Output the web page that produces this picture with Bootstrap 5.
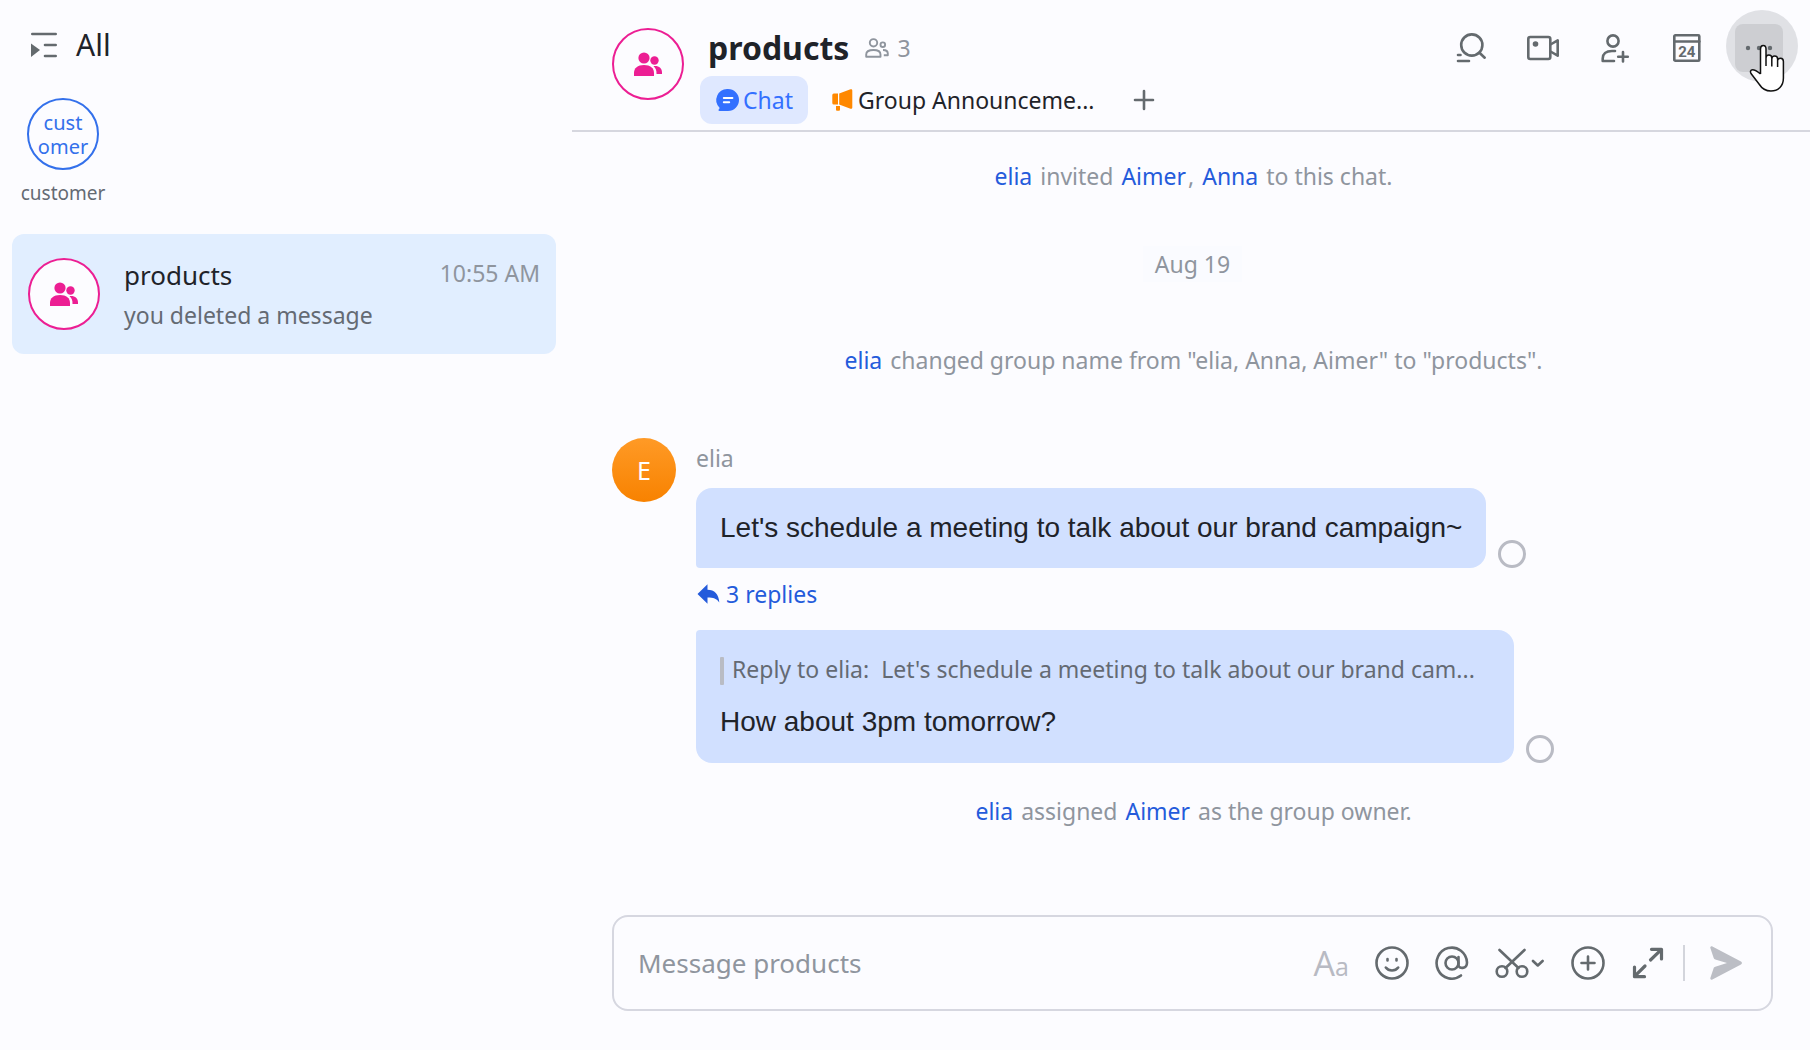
<!DOCTYPE html>
<html lang="en">
<head>
<meta charset="utf-8">
<meta name="viewport" content="width=device-width, initial-scale=1">
<title>products - Chat</title>
<link href="https://cdn.jsdelivr.net/npm/bootstrap@5.3.0/dist/css/bootstrap.min.css" rel="stylesheet">
<style>
:root { --ink:#1f2329; --mid:#646a73; --soft:#8f959e; --link:#245bdb; --pink:#ec1e93; --bubble:#d1e0ff; }
body { background:#fcfcff; color:var(--ink); font-family:"Noto Sans","Open Sans",sans-serif; font-size:23px; line-height:32px; }
svg { display:block; flex:none; overflow:visible; }
a { color:var(--link); text-decoration:none; }
button { color:inherit; }
.tool { border:0; background:none; padding:0; color:#646a6e; display:flex; align-items:center; justify-content:center; }
.ln { fill:none; stroke:currentColor; stroke-width:2.6; stroke-linecap:round; stroke-linejoin:round; }
.thick { stroke-width:3.2; }
.soft { color:var(--soft); }
.mid { color:var(--mid); }

.side { width:572px; padding:25px 16px 0 12px; }
.side-head { padding-left:19px; gap:19px; height:40px; }
.side-head h1 { font-size:30px; line-height:40px; font-weight:400; }
.pin { width:102px; margin-top:33px; gap:11px; font-size:19px; line-height:24px; }
.ring { width:72px; height:72px; border:2px solid var(--pink); color:var(--pink); border-radius:50%; background:#fcfcff; display:flex; align-items:center; justify-content:center; flex:none; }
.ring-blue { border-color:#3370eb; color:#3370eb; font-size:20px; line-height:24px; padding-top:2px; }
.chat-row { margin-top:29px; padding:0 16px; height:120px; border-radius:12px; background:#e1eeff; gap:24px; color:var(--ink); }
.chat-name { font-size:26px; line-height:36px; }
.chat-last { margin-top:6px; }

.top-bar { border-bottom:2px solid #d6d7df; padding:20px 27px 6px 40px; }
.title-row { height:56px; gap:16px; padding-left:8px; }
.title-row h2 { font-size:32px; line-height:40px; font-weight:700; }
.tabs { height:48px; gap:24px; }
.tab-chip { height:48px; border-radius:12px; color:var(--ink); display:flex; align-items:center; gap:4px; }
.tab-chip.on { background:#dfe8ff; color:#3370ff; padding:0 15px 0 17px; }
.acts { height:56px; gap:24px; }
.acts .tool { width:48px; height:48px; }
.acts .more { position:relative; background:#d2d3d5; border-radius:8px; }
.halo { position:absolute; left:-9px; top:-14px; width:72px; height:72px; border-radius:50%; background:#c9cad0; opacity:.55; }
.hand { position:absolute; left:14px; top:20px; }
.dots { position:relative; }

.feed { padding:28px 37px 0 40px; }
.note { text-align:center; color:var(--soft); }
.note a { margin:0 2px; }
.day { margin:54px auto 62px; padding:2px 12px; background:#fafbff; }
.msg { margin-top:62px; gap:20px; }
.face { width:64px; height:64px; border-radius:50%; background:linear-gradient(#ff9a26,#f88200); color:#fff; font-size:25px; flex:none; display:flex; align-items:center; justify-content:center; }
.who { padding-top:4px; margin-bottom:14px; }
.bubble { background:var(--bubble); border-radius:16px; font-family:"Liberation Sans",Arial,sans-serif; font-size:28px; line-height:40px; }
.bubble-a { padding:20px 24px; border-bottom-left-radius:4px; }
.bubble-b { padding:22px 39px 21px 24px; border-top-left-radius:4px; }
.quote { font-family:"Noto Sans",sans-serif; font-size:23px; line-height:34px; margin-bottom:16px; gap:8px; }
.quote-bar { width:4px; height:28px; margin-top:4px; background:#b9bcc4; border-radius:1px; }
.seen { width:28px; height:28px; border:3px solid #b9bbc4; border-radius:50%; flex:none; }
.thread { margin:10px 0 20px; gap:6px; }

.composer { margin:0 37px 39px 40px; border:2px solid #d6d7e0; border-radius:16px; height:96px; padding:0 28px 0 24px; }
.composer input { border:0; background:none; outline:0; font-size:26px; color:var(--ink); min-width:0; padding:0; }
.composer input::placeholder { color:var(--soft); opacity:1; }
.tools { gap:26px; }
.tools .tool { height:34px; min-width:34px; }
.letters { color:#b8bac3; font-size:34px; line-height:34px; align-items:baseline; font-family:"Open Sans","Noto Sans",sans-serif; font-weight:400; }
.letters span { font-size:25px; }
.send-group { gap:24px; margin-left:-8px; }
.split { width:2px; height:36px; background:#d3d5dc; }
</style>
</head>
<body>
<svg width="0" height="0" class="position-absolute" aria-hidden="true">
  <symbol id="people" viewBox="0 0 28 24">
    <circle cx="10" cy="6" r="5.6"/><path d="M0 24v-3c0-5 3.600-8 10-8s10 3 10 8v3z"/>
    <circle cx="20.500" cy="8.500" r="4.200"/><path d="M19.500 14.200c5.500-.6 8.500 2.300 8.500 6.300V22h-5.500c.2-3.500-.8-6-3-7.800z"/>
  </symbol>
</svg>
<div class="d-flex min-vh-100">
  <aside class="side flex-shrink-0">
    <div class="side-head d-flex align-items-center">
      <button class="tool" aria-label="Expand filters"><svg width="26" height="26" viewBox="0 0 26 26"><path class="ln" d="M1.300 2h23.400M14 13h10.700M14 24h10.700"/><path d="M0 11.500l9 6.500-9 7z" fill="currentColor"/></svg></button>
      <h1 class="m-0">All</h1>
    </div>
    <a href="#" class="pin d-flex flex-column align-items-center mid">
      <span class="ring ring-blue text-center">cust<br>omer</span>
      <span>customer</span>
    </a>
    <a href="#" class="chat-row d-flex align-items-center">
      <span class="ring"><svg width="28" height="24" fill="currentColor"><use href="#people"/></svg></span>
      <span class="flex-grow-1">
        <span class="d-flex justify-content-between"><span class="chat-name">products</span><span class="soft">10:55 AM</span></span>
        <span class="chat-last mid d-block">you deleted a message</span>
      </span>
    </a>
  </aside>

  <main class="flex-grow-1 d-flex flex-column">
    <header class="top-bar d-flex">
      <span class="ring mt-2"><svg width="28" height="24" fill="currentColor"><use href="#people"/></svg></span>
      <div class="ms-3 flex-grow-1">
        <div class="title-row d-flex align-items-center">
          <h2 class="m-0">products</h2>
          <span class="soft d-flex align-items-center gap-2">
            <svg width="24" height="20" viewBox="0 0 24 20" fill="none" stroke="currentColor" stroke-width="1.900" stroke-linejoin="round"><circle cx="8.500" cy="4.800" r="3.700"/><path d="M1.200 18.700v-2.200c0-3 2-4.500 7.300-4.500s7 1.500 7 4.500v2.200z"/><circle cx="17.800" cy="6.700" r="2.300"/><path d="M18 12c3 0 4.800 1.200 4.800 3.500v1.700h-4"/></svg>
            <span>3</span>
          </span>
        </div>
        <nav class="tabs d-flex align-items-center">
          <a href="#" class="tab-chip on"><svg width="22" height="22" viewBox="0 0 22 22"><path d="M11 0a11 11 0 1 1 0 22H2.500c-1 0-1.300-.8-.8-1.500l1-1.600A11 11 0 0 1 11 0z" fill="#3370ff"/><path d="M6.800 9h8.600M6.800 13.200h5.400" stroke="#fff" stroke-width="2" stroke-linecap="round"/></svg>Chat</a>
          <a href="#" class="tab-chip"><svg width="22" height="22" viewBox="0 0 22 22" fill="#ff8800"><path d="M1.800 4.500H6v11H1.800A1.500 1.500 0 0 1 .3 14V6a1.500 1.500 0 0 1 1.500-1.500zM7.200 4.500L18.500.3c1-.3 1.800.2 1.800 1.200v17c0 1-.8 1.500-1.800 1.200L7.200 15.500zM4 17h4v3.500c0 .8-.5 1.300-1.200 1.300H5.200c-.7 0-1.200-.5-1.200-1.300z"/></svg><span class="text-nowrap">Group Announceme...</span></a>
          <button class="tool ms-3" aria-label="Add tab"><svg width="20" height="20" viewBox="0 0 20 20"><path class="ln" d="M10 1v18M1 10h18"/></svg></button>
        </nav>
      </div>
      <div class="acts d-flex align-items-center">
        <button class="tool" aria-label="Search"><svg width="30" height="30" viewBox="0 0 30 30"><g class="ln"><circle cx="15.800" cy="12" r="10.600"/><path d="M23.500 19.700l5.200 5M2 22h2.500M2 28h11"/></g></svg></button>
        <button class="tool" aria-label="Video call"><svg width="32" height="26" viewBox="0 0 32 26"><g class="ln"><rect x="1.300" y="2" width="22" height="22" rx="2"/><path d="M23.500 9.500l7.200-4.200v15.400l-7.200-4.200"/></g><circle cx="8.500" cy="9" r="2.800" fill="currentColor"/></svg></button>
        <button class="tool" aria-label="Add member"><svg width="28" height="28" viewBox="0 0 28 28"><g class="ln"><circle cx="12" cy="7" r="5.600"/><path d="M14 17h-3c-6 0-9.300 3-9.300 7.500V27H13M22 18v9.500M17.200 22.700h9.600"/></g></svg></button>
        <button class="tool" aria-label="Calendar"><svg width="28" height="28" viewBox="0 0 28 28"><g class="ln"><rect x="1.300" y="1.300" width="25" height="25.400" rx="1"/><path d="M1.300 7.500h25"/></g><text x="13.800" y="22.600" text-anchor="middle" font-family="Roboto,sans-serif" font-weight="700" font-size="15" fill="currentColor">24</text></svg></button>
        <button class="tool more" aria-label="More"><span class="halo"></span>
          <svg class="dots" width="28" height="6" viewBox="0 0 28 6" fill="currentColor"><circle cx="3" cy="3" r="2.200"/><circle cx="14" cy="3" r="2.200"/><circle cx="25" cy="3" r="2.200"/></svg>
          <svg class="hand" width="36" height="48" viewBox="0 0 36 48"><path d="M11.500 30V5C11.500 3 12.600 1.500 14.200 1.500S17 3 17 5v9c0-2 1.200-3 2.900-3s2.900 1.200 2.900 3v1c0-2 1.200-3 2.900-3s2.900 1.200 2.900 3v2c0-1.900 1.200-2.800 2.900-2.800s2.900 1.300 2.900 3.300V34c0 8-5 13-12.500 13-5.500 0-9-2.500-11.500-6.500L2 29.500C1 27.500 1.500 25.800 3.500 25.800c2.700 0 5 1.700 8 4.200M17 14v8M22.800 15v7.500M28.600 17v6" fill="#fff" stroke="#111" stroke-width="1.500" stroke-linejoin="round"/></svg>
        </button>
      </div>
    </header>

    <section class="feed d-flex flex-column flex-grow-1">
      <div class="note"><a href="#">elia</a> invited <a href="#">Aimer</a>, <a href="#">Anna</a> to this chat.</div>
      <div class="note day">Aug 19</div>
      <div class="note"><a href="#">elia</a> changed group name from "elia, Anna, Aimer" to "products".</div>
      <div class="msg d-flex">
        <div class="face">E</div>
        <div>
          <div class="who soft">elia</div>
          <div class="d-flex align-items-end gap-2">
            <div class="bubble bubble-a">Let's schedule a meeting to talk about our brand campaign~</div>
            <span class="seen ms-1"></span>
          </div>
          <a href="#" class="thread d-flex align-items-center"><svg width="24" height="22" viewBox="0 0 24 22" fill="currentColor"><path d="M1.500 11L11.500 1.300v5.500c7 0 11.300 4.500 11.800 12.700-2.500-3.800-6-5-11.800-5v6.200z"/></svg>3 replies</a>
          <div class="d-flex align-items-end gap-2">
            <div class="bubble bubble-b">
              <div class="quote mid d-flex align-items-center"><span class="quote-bar"></span><span>Reply to elia: &nbsp;Let's schedule a meeting to talk about our brand cam...</span></div>
              <div>How about 3pm tomorrow?</div>
            </div>
            <span class="seen ms-1"></span>
          </div>
        </div>
      </div>
      <div class="note mt-4 pt-2"><a href="#">elia</a> assigned <a href="#">Aimer</a> as the group owner.</div>
    </section>

    <form class="composer d-flex align-items-center">
      <input class="flex-grow-1" type="text" placeholder="Message products" aria-label="Message products">
      <div class="tools d-flex align-items-center">
        <button type="button" class="tool letters" aria-label="Text format">A<span>a</span></button>
        <button type="button" class="tool" aria-label="Emoji"><svg width="34" height="34" viewBox="0 0 34 34"><g class="ln"><circle cx="17" cy="17" r="15.500"/><path d="M10.800 21.500c3 4 9.400 4 12.400 0M12.500 13v1.500M21.500 13v1.500"/></g></svg></button>
        <button type="button" class="tool" aria-label="Mention"><svg width="34" height="34" viewBox="0 0 34 34"><g class="ln"><circle cx="17" cy="17" r="6.500"/><path d="M23.500 11v8c0 4 8.500 4.500 8.500-2.500A15.200 15.500 0 1 0 26 29.500"/></g></svg></button>
        <button type="button" class="tool" aria-label="Screenshot"><svg width="50" height="34" viewBox="0 0 50 34"><g class="ln"><circle cx="7" cy="25.500" r="5.300"/><circle cx="27" cy="25.500" r="5.300"/><path d="M4.500 4l19 18M29.500 4l-19 18M38 15l4.800 4.500 4.800-4.500"/></g></svg></button>
        <button type="button" class="tool" aria-label="Add"><svg width="34" height="34" viewBox="0 0 34 34"><g class="ln"><circle cx="17" cy="17" r="15.500"/><path d="M17 10.500v13M10.500 17h13"/></g></svg></button>
        <button type="button" class="tool" aria-label="Expand"><svg width="34" height="34" viewBox="0 0 34 34"><path d="M19.500 14L30 3.800M20.500 3.300h10V13M14 20L3.800 30.200M3.500 21v9.700h10" class="ln thick"/></svg></button>
        <span class="send-group d-flex align-items-center"><span class="split"></span>
        <button type="submit" class="tool" aria-label="Send"><svg width="34" height="34" viewBox="0 0 34 34"><path d="M1.500 2.500C.8 1 1.900-.2 3.400.5L32 15.500c1.300.7 1.300 2.300 0 3L3.400 33.500c-1.500.7-2.600-.5-1.900-2l3.200-9.400c.3-.8.800-1.100 1.600-1.300L18 17 6.300 13.500c-.8-.2-1.300-.6-1.600-1.400z" fill="#bcbec5"/></svg></button></span>
      </div>
    </form>
  </main>
</div>
<script src="https://cdn.jsdelivr.net/npm/bootstrap@5.3.0/dist/js/bootstrap.bundle.min.js"></script>
</body>
</html>
